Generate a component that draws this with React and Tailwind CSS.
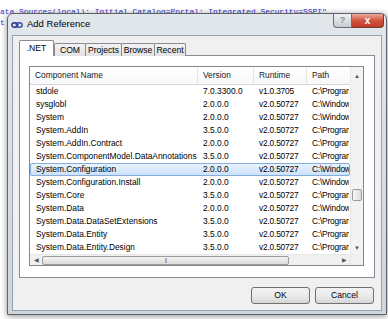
import React from 'react';

const rows = [
  ['stdole', '7.0.3300.0', 'v1.0.3705', 'C:\\Program Files'],
  ['sysglobl', '2.0.0.0', 'v2.0.50727', 'C:\\Windows'],
  ['System', '2.0.0.0', 'v2.0.50727', 'C:\\Windows'],
  ['System.AddIn', '3.5.0.0', 'v2.0.50727', 'C:\\Program Files'],
  ['System.AddIn.Contract', '2.0.0.0', 'v2.0.50727', 'C:\\Program Files'],
  ['System.ComponentModel.DataAnnotations', '3.5.0.0', 'v2.0.50727', 'C:\\Program Files'],
  ['System.Configuration', '2.0.0.0', 'v2.0.50727', 'C:\\Windows'],
  ['System.Configuration.Install', '2.0.0.0', 'v2.0.50727', 'C:\\Windows'],
  ['System.Core', '3.5.0.0', 'v2.0.50727', 'C:\\Program Files'],
  ['System.Data', '2.0.0.0', 'v2.0.50727', 'C:\\Windows'],
  ['System.Data.DataSetExtensions', '3.5.0.0', 'v2.0.50727', 'C:\\Program Files'],
  ['System.Data.Entity', '3.5.0.0', 'v2.0.50727', 'C:\\Program Files'],
  ['System.Data.Entity.Design', '3.5.0.0', 'v2.0.50727', 'C:\\Program Files'],
];

const tabs = [
  { label: '.NET', w: 'w-[35px]' },
  { label: 'COM', w: 'w-[32px]' },
  { label: 'Projects', w: 'w-[37px]' },
  { label: 'Browse', w: 'w-[34px]' },
  { label: 'Recent', w: 'w-[32px]' },
];

const RefIcon = () => (
  <svg width="12" height="8" viewBox="0 0 12 8">
    <ellipse cx="3.8" cy="4" rx="3" ry="2.3" fill="none" stroke="#25307a" strokeWidth="1.4" />
    <ellipse cx="8.2" cy="4" rx="3" ry="2.3" fill="none" stroke="#3b4bb0" strokeWidth="1.4" />
  </svg>
);

const Cell = ({ w, children, className = '' }) => (
  <div className={`${w} shrink-0 overflow-hidden whitespace-nowrap pl-[5px] ${className}`}>{children}</div>
);

export default function App() {
  return (
    <div className="relative w-[388px] h-[319px] overflow-hidden bg-white" style={{ fontFamily: '"Liberation Sans", Arial, sans-serif' }}>
      {/* code behind the dialog */}
      <div className="pt-[6px] text-[7.9px] leading-[11px] text-[#2f2fd0] whitespace-pre" style={{ fontFamily: '"Liberation Mono", monospace' }}>
        <div>ata Source=(local); Initial Catalog=Portal; Integrated Security=SSPI"</div>
        <div>t</div>
      </div>

      {/* dialog window */}
      <div className="absolute left-[7px] top-[13px] w-[380px] h-[302px] flex flex-col rounded-t-[6px] border border-[#5d636b] bg-gradient-to-b from-[#e2e7ec] to-[#cfd5dc] shadow-[0_1px_6px_rgba(0,0,0,0.45)]">
        {/* title bar */}
        <div className="h-[21px] flex items-start shrink-0">
          <div className="flex items-center h-[21px] pl-[3px] gap-[4px]">
            <RefIcon />
            <span className="text-[9.5px] text-black">Add Reference</span>
          </div>
          <div className="ml-auto mr-[2px] flex">
            <div className="w-[19px] h-[14px] flex items-center justify-center rounded-bl-[4px] border border-t-0 border-[#6b7078] bg-gradient-to-b from-[#f0f2f4] to-[#c7cbd0] text-[9px] font-bold text-[#8a8f96] leading-none">?</div>
            <div className="w-[32px] h-[14px] flex items-center justify-center rounded-br-[4px] border border-t-0 border-l-0 border-[#6e3a33] bg-gradient-to-b from-[#e9a89a] via-[#d2533f] to-[#c33a28] text-[10px] font-bold text-white leading-none">x</div>
          </div>
        </div>

        {/* client */}
        <div className="flex-1 mx-[4px] mb-[3px] border border-[#9aa1a9] bg-[#f0f0f0] flex flex-col px-[6px] pt-[4px]">
          {/* tabs */}
          <div className="flex items-end h-[16px] relative z-10">
            {tabs.map((t, i) => (
              <div
                key={t.label}
                className={`${t.w} flex items-center justify-center border border-[#898c95] text-[8.6px] text-black ${
                  i === 0
                    ? 'h-[16px] bg-white border-b-0 rounded-t-[2px]'
                    : 'h-[13px] -ml-px bg-gradient-to-b from-[#f3f3f3] to-[#e2e2e2] border-b-0 rounded-t-[2px]'
                } ${i === 1 ? 'ml-0' : ''}`}
              >
                {t.label}
              </div>
            ))}
          </div>

          {/* tab panel */}
          <div className="w-[356px] h-[223px] -mt-px border border-[#898c95] bg-white pt-[10px] pl-[9px]">
            {/* list view */}
            <div className="w-[335px] h-[200px] border border-[#828790] bg-white flex text-[8.4px] text-black">
              <div className="w-[320px] flex flex-col">
                {/* header */}
                <div className="h-[18px] flex items-center border-b border-[#d5d5d5] bg-gradient-to-b from-white to-[#f7f8fa] text-[#1a1a1a]">
                  <Cell w="w-[168px]" className="h-full flex items-center border-r border-[#e5e5e5]">Component Name</Cell>
                  <Cell w="w-[56px]" className="h-full flex items-center border-r border-[#e5e5e5] pl-[4px]">Version</Cell>
                  <Cell w="w-[53px]" className="h-full flex items-center border-r border-[#e5e5e5] pl-[3px]">Runtime</Cell>
                  <Cell w="w-[43px]" className="h-full flex items-center">Path</Cell>
                </div>
                {/* rows */}
                <div className="flex flex-col">
                  {rows.map((r, i) => (
                    <div
                      key={r[0]}
                      className={`h-[13px] flex items-center ${
                        i === 6 ? 'bg-gradient-to-b from-[#eaf3fd] to-[#cde2fb] border border-[#84acdd] rounded-[2px]' : 'border border-transparent'
                      }`}
                    >
                      <Cell w="w-[167px]">{r[0]}</Cell>
                      <Cell w="w-[56px]" className="pl-[4px]">{r[1]}</Cell>
                      <Cell w="w-[53px]" className="pl-[3px] tracking-[-0.2px]">{r[2]}</Cell>
                      <Cell w="w-[42px]" className="tracking-[-0.2px]">{r[3]}</Cell>
                    </div>
                  ))}
                </div>
                {/* horizontal scrollbar */}
                <div className="mt-auto h-[11px] flex items-center bg-[#f0f0f0] border-t border-[#e8e8e8]">
                  <div className="w-[12px] flex justify-center text-[6px] text-[#555] leading-none">◀</div>
                  <div className="w-[247px] h-[9px] rounded-[2px] border border-[#9c9c9c] bg-gradient-to-b from-[#f4f4f4] to-[#dcdcdc] flex items-center justify-center">
                    <span className="text-[5px] text-[#777] leading-none tracking-[-1px]">|||</span>
                  </div>
                  <div className="ml-auto w-[12px] flex justify-center text-[6px] text-[#555] leading-none">▶</div>
                </div>
              </div>
              {/* vertical scrollbar */}
              <div className="w-[13px] flex flex-col bg-[#f3f3f3] border-l border-[#e8e8e8]">
                <div className="h-[18px] flex items-center justify-center text-[6px] text-[#555] leading-none">▲</div>
                <div className="h-[104px]" />
                <div className="mx-[1px] h-[12px] rounded-[2px] border border-[#9c9c9c] bg-gradient-to-r from-[#f6f6f6] to-[#dedede]" />
                <div className="flex-1" />
                <div className="h-[12px] flex items-center justify-center text-[6px] text-[#555] leading-none">▼</div>
                <div className="h-[11px] bg-[#f0f0f0]" />
              </div>
            </div>
          </div>

          {/* buttons */}
          <div className="flex justify-end gap-[5px] mt-[9px] pr-[1px]">
            <button className="w-[59px] h-[17px] rounded-[3px] border border-[#707070] bg-gradient-to-b from-[#f2f2f2] via-[#ebebeb] to-[#d6d6d6] text-[8.6px] text-black leading-none">OK</button>
            <button className="w-[59px] h-[17px] rounded-[3px] border border-[#707070] bg-gradient-to-b from-[#f2f2f2] via-[#ebebeb] to-[#d6d6d6] text-[8.6px] text-black leading-none">Cancel</button>
          </div>
        </div>
      </div>
    </div>
  );
}
